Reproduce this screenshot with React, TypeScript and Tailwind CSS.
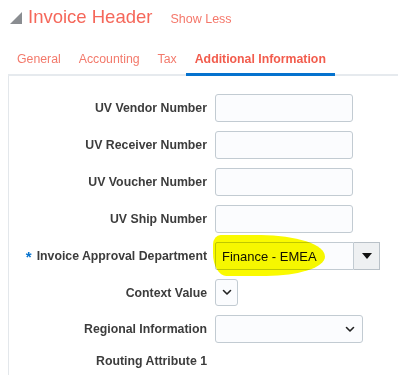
import React from "react";

const font = { fontFamily: '"Liberation Sans", Arial, sans-serif' };

function Label({ children, req }: { children: React.ReactNode; req?: boolean }) {
  return (
    <div className="flex h-full items-center justify-end text-right text-[12.3px] font-bold text-[#3c3c3c] whitespace-nowrap">
      {req && <span className="mr-[5px] text-[15px] leading-none text-[#0572ce]">*</span>}
      {children}
    </div>
  );
}

function TextBox() {
  return <div className="h-[28px] w-[138px] rounded-[3px] border border-[#c2cbd2] bg-[#fbfcfe]" />;
}

function Chevron() {
  return (
    <svg width="10" height="7" viewBox="0 0 10 7" fill="none">
      <path d="M1.5 1.5 L5 5 L8.5 1.5" stroke="#222" strokeWidth="1.6" strokeLinecap="round" strokeLinejoin="round" />
    </svg>
  );
}

export default function App() {
  return (
    <div className="h-[375px] w-[398px] overflow-hidden bg-white" style={font}>
      <div className="flex items-baseline pl-[10px] pt-[4px]">
        <svg width="12" height="12" viewBox="0 0 12 12" className="mr-[6px] self-center mt-[2px]">
          <polygon points="0,12 12,12 12,0" fill="#8a8d91" />
        </svg>
        <span className="text-[18.5px] leading-[26px] text-[#f5675a]">Invoice Header</span>
        <span className="ml-[18px] text-[12.5px] text-[#f5786b]">Show Less</span>
      </div>
      <div className="mt-[20px] flex items-end text-[12.3px] text-[#f37a6c]">
        <div className="w-[8px]" />
        <div className="flex flex-1 border-b-2 border-[#e6eaee]">
          <span className="px-[9px] pb-[6px]">General</span>
          <span className="px-[9px] pb-[6px]">Accounting</span>
          <span className="px-[9px] pb-[6px]">Tax</span>
          <span className="relative -mb-[2px] border-b-[3px] border-[#0572ce] px-[9px] pb-[5px] font-bold text-[#f25c4d]">
            Additional Information
          </span>
        </div>
      </div>
      <div className="ml-[8px] border-l border-[#e3e7eb] pt-[18px] pb-[20px]">
        <div className="grid grid-cols-[198px_auto] gap-x-[8px] gap-y-[9px]">
          <Label>UV Vendor Number</Label>
          <TextBox />
          <Label>UV Receiver Number</Label>
          <TextBox />
          <Label>UV Voucher Number</Label>
          <TextBox />
          <Label>UV Ship Number</Label>
          <TextBox />
          <Label req>Invoice Approval Department</Label>
          <div className="relative flex h-[28px] w-[165px]">
            <div className="flex h-[28px] w-[139px] items-center rounded-l-[2px] border border-[#c2cbd2] bg-[#fbfcfe] pl-[6px] text-[13px] text-[#111]">
              Finance - EMEA
            </div>
            <div className="flex h-[28px] w-[26px] items-center justify-center border border-l-0 border-[#b9c1c8] bg-[#eef0f2]">
              <svg width="10" height="6" viewBox="0 0 10 6">
                <polygon points="0,0 10,0 5,6" fill="#111" />
              </svg>
            </div>
            <div
              className="pointer-events-none absolute left-[-2px] top-[-7px] h-[41px] w-[112px] bg-[#fafa00] mix-blend-multiply"
              style={{ borderRadius: "8px 60% 55% 14px / 10px 55% 50% 24px" }}
            />
          </div>
          <Label>Context Value</Label>
          <div className="flex h-[27px] w-[23px] items-center justify-center rounded-[3px] border border-[#c2cbd2] bg-[#fbfcfe]">
            <Chevron />
          </div>
          <Label>Regional Information</Label>
          <div className="flex h-[28px] w-[148px] items-center justify-end rounded-[3px] border border-[#c2cbd2] bg-[#fbfcfe] pr-[7px]">
            <Chevron />
          </div>
          <div className="h-[18px]">
            <Label>Routing Attribute 1</Label>
          </div>
          <div />
        </div>
      </div>
    </div>
  );
}
